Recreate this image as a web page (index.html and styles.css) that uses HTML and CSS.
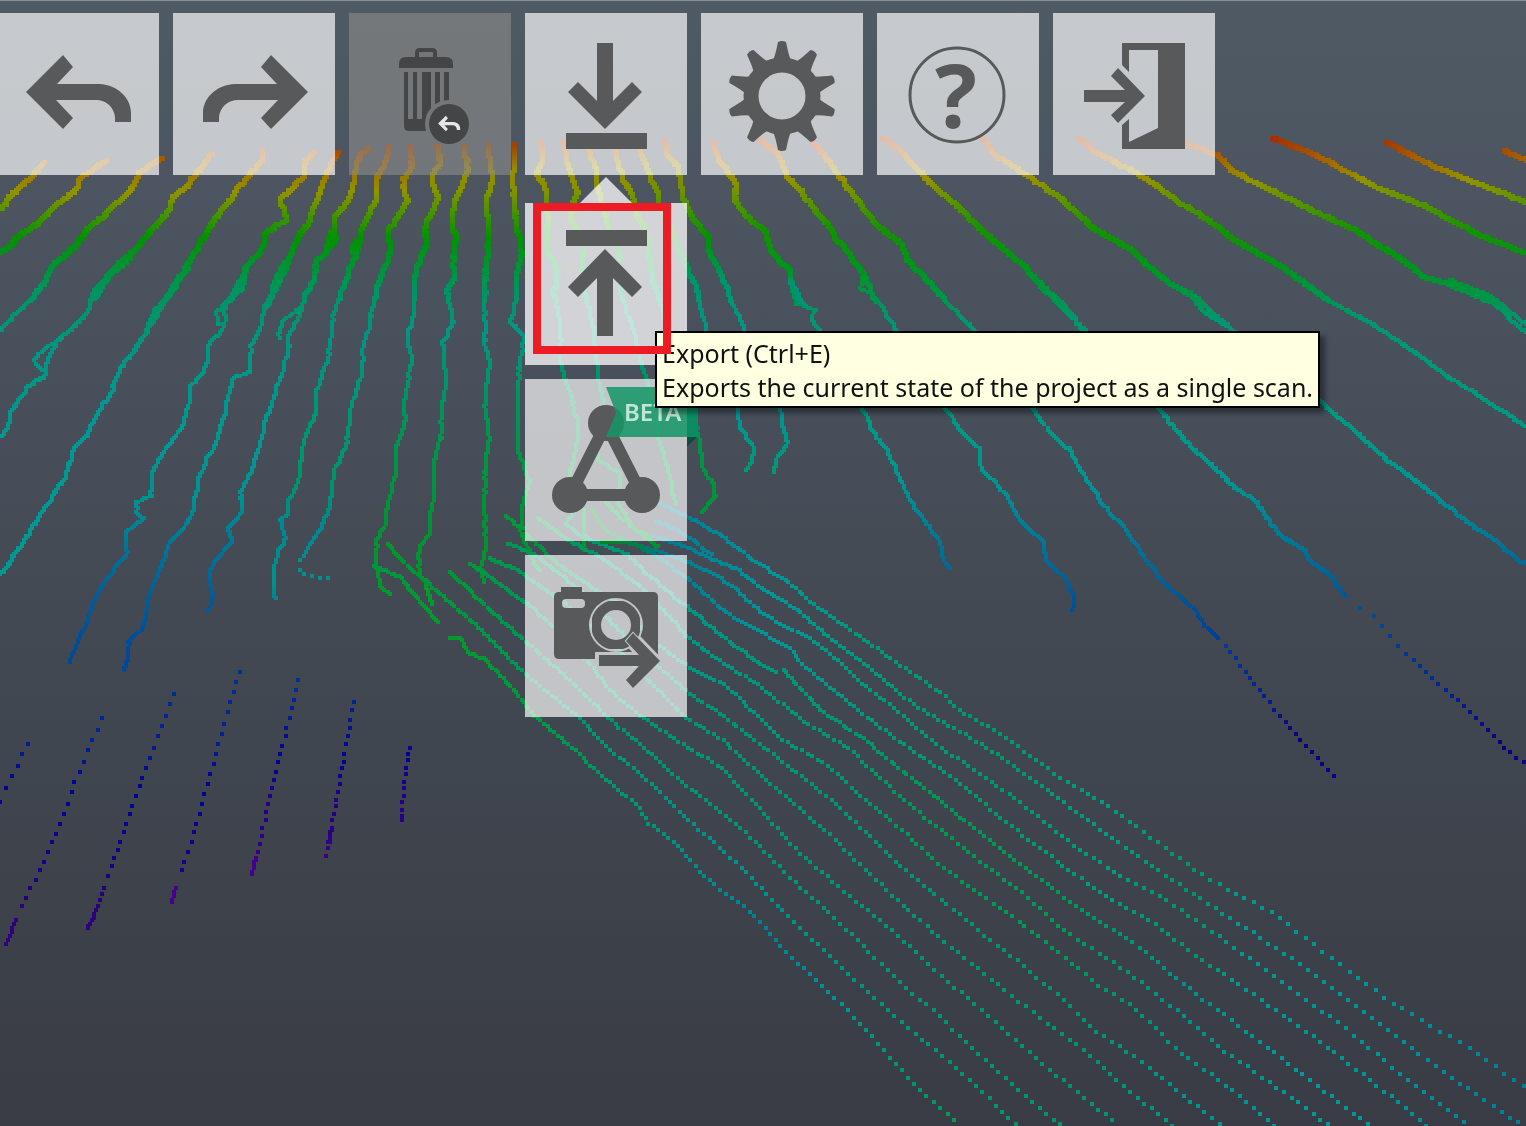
FILE: index.html
```html
<!DOCTYPE html>
<html lang="en">
<head>
<meta charset="utf-8">
<title>Point cloud viewer</title>
<link rel="stylesheet" href="styles.css">
</head>
<body>
<canvas class="cloud" id="cloud" width="1526" height="1126" aria-hidden="true"></canvas>
<main class="viewer">
  <nav class="toolbar" aria-label="Main tools">
    <button class="tile" type="button" aria-label="Undo">
      <svg class="icon" viewBox="0 0 162 162"><path id="back" d="M29 79L66 42 76 54 60 71H102C122 72 134 86 134 100V109H118V104C117 94 109 87 99 87H59L76 105 66 116Z"/></svg>
    </button>
    <button class="tile" type="button" aria-label="Redo">
      <svg class="icon" viewBox="0 0 162 162"><use href="#back" transform="translate(164 0) scale(-1 1)"/></svg>
    </button>
    <button class="tile tile-off" type="button" aria-label="Restore deleted" disabled>
      <svg class="icon" viewBox="0 0 162 162">
        <mask id="binCut"><rect width="162" height="162" fill="#fff"/><circle cx="100" cy="111" r="24" fill="#000"/></mask>
        <path d="M68 45V40Q68 37 71 37H83Q86 37 86 40V45" fill="none" stroke="#444546" stroke-width="4"/>
        <path d="M50 55V51Q50 44 57 44H97Q104 44 104 51V55Z"/>
        <path mask="url(#binCut)" d="M55 59H59V106H64V59H68V106H73V59H82V106H86V59H91V106H95V59H100V118H60Q55 118 55 113Z"/>
        <circle cx="100" cy="111" r="20"/>
        <use href="#back" fill="#e6e6e6" transform="translate(83 94) scale(.21)"/>
      </svg>
    </button>
    <div class="group">
      <button class="tile" type="button" aria-label="Import" aria-expanded="true">
        <svg class="icon" viewBox="0 0 162 162"><path d="M72 30H88V88L107 69 117 79 80 116 43 79 53 69 72 88ZM41 120H122V136H41Z"/></svg>
      </button>
      <div class="pointer"></div>
      <div class="menu">
        <div class="entry">
          <button class="tile tile-hot" type="button" aria-label="Export" aria-describedby="tip">
            <svg class="icon" viewBox="0 0 162 162"><path d="M41 27H122V43H41ZM80 46L117 84 107 94 88 75V133H72V75L53 94 43 84Z"/></svg>
          </button>
          <div class="tip" id="tip" role="tooltip">
            <p class="tip-line">Export (Ctrl+E)</p>
            <p class="tip-line">Exports the current state of the project as a single scan.</p>
          </div>
          <div class="marker"></div>
        </div>
        <div class="entry">
          <button class="tile" type="button" aria-label="Network, beta">
            <svg class="icon" viewBox="0 0 162 162"><path d="M81 45L45 116H117Z" fill="none" stroke="#58595a" stroke-width="12"/><circle cx="81" cy="44" r="18"/><circle cx="45" cy="116" r="18"/><circle cx="117" cy="116" r="18"/></svg>
          </button>
          <div class="flag"><span class="flag-text">BETA</span></div>
          <div class="fold"></div>
        </div>
        <button class="tile" type="button" aria-label="Export image">
          <svg class="icon" viewBox="0 0 162 162">
            <mask id="camCut"><rect width="162" height="162" fill="#fff"/><rect x="37" y="44" width="23" height="9" rx="4" fill="#000"/><circle cx="91" cy="70" r="27" fill="#000"/><path d="M74 100H114L101 86 108 78 135 106 108 133 101 125 114 111H74Z" fill="#000" stroke="#000" stroke-width="6"/><rect x="70" y="97" width="20" height="12" fill="#000"/></mask>
            <mask id="lensCut"><rect width="162" height="162" fill="#fff"/><path d="M74 100H114L101 86 108 78 135 106Z" fill="#000" stroke="#000" stroke-width="2"/></mask>
            <path mask="url(#camCut)" d="M36 37V32H57V37H128Q133 37 133 42V104H34Q29 104 29 99V42Q29 37 34 37Z"/>
            <circle mask="url(#lensCut)" cx="91" cy="70" r="20" fill="none" stroke="#58595a" stroke-width="10"/>
            <path d="M74 100H114L101 86 108 78 135 106 108 133 101 125 114 111H74Z"/>
          </svg>
        </button>
      </div>
    </div>
    <button class="tile" type="button" aria-label="Settings">
      <svg class="icon" viewBox="0 0 162 162">
        <g transform="translate(81 83)">
          <circle r="31" fill="none" stroke="#58595a" stroke-width="15"/>
          <path id="tooth" d="M-9 -36Q-7 -39 -4 -54Q0 -56 4 -54Q7 -39 9 -36Z"/>
          <use href="#tooth" transform="rotate(36)"/><use href="#tooth" transform="rotate(72)"/><use href="#tooth" transform="rotate(108)"/><use href="#tooth" transform="rotate(144)"/><use href="#tooth" transform="rotate(180)"/><use href="#tooth" transform="rotate(216)"/><use href="#tooth" transform="rotate(252)"/><use href="#tooth" transform="rotate(288)"/><use href="#tooth" transform="rotate(324)"/>
        </g>
      </svg>
    </button>
    <button class="tile" type="button" aria-label="Help">
      <svg class="icon" viewBox="0 0 162 162"><circle cx="80" cy="82" r="47" fill="none" stroke="#58595a" stroke-width="3"/><text class="mark" x="79" y="115" text-anchor="middle">?</text></svg>
    </button>
    <button class="tile" type="button" aria-label="Exit">
      <svg class="icon" viewBox="0 0 162 162"><path d="M69 30H132V136H69V112L76 106V129L105 115V37H76V59L69 52ZM31 77H72L58 63 65 55 92 83 65 110 58 102 72 89H31Z"/></svg>
    </button>
  </nav>
</main>
<script src="cloud.js"></script>
</body>
</html>
```
FILE: styles.css
```css
* { box-sizing: border-box; }

body {
  margin: 0;
  min-height: 100vh;
  overflow: hidden;
  background: linear-gradient(#4f5a64, #4b535f 22%, #434a54 52%, #393c44);
  font-family: "Noto Sans", "Open Sans", sans-serif;
}

.cloud {
  position: fixed;
  top: 0;
  left: 0;
  width: 100%;
  height: 100%;
  object-fit: cover;
  object-position: left top;
}

.viewer {
  position: relative;
  border-top: 1px solid #87919a;
}

.toolbar {
  display: flex;
  align-items: flex-start;
  gap: 14px;
  margin-left: -3px;
  padding-top: 12px;
}

.tile {
  display: block;
  flex: none;
  width: 162px;
  height: 162px;
  margin: 0;
  padding: 0;
  border: 0;
  background: rgba(255, 255, 255, .68);
}

.tile-off { background: rgba(142, 140, 138, .6); }
.tile-off .icon { fill: #444546; }
.tile-hot { background: rgba(255, 255, 255, .75); }

.icon {
  display: block;
  width: 100%;
  height: 100%;
  fill: #58595a;
}

.mark {
  font-family: "Open Sans", "Noto Sans", sans-serif;
  font-size: 88px;
  font-weight: 700;
}

.group, .menu {
  display: flex;
  flex-direction: column;
}

.menu { gap: 14px; }

.pointer {
  align-self: center;
  width: 52px;
  height: 26px;
  margin-top: 2px;
  background: rgba(255, 255, 255, .75);
  clip-path: polygon(50% 0, 100% 100%, 0 100%);
}

.entry { position: relative; }
.entry:first-child { z-index: 2; }

.tip {
  position: absolute;
  left: 130px;
  top: 128px;
  padding: 3px 5px 2px;
  border: 2px solid #000;
  background: #ffffe1;
  box-shadow: 5px 5px 5px rgba(0, 0, 0, .4);
  color: #111;
  white-space: nowrap;
}

.tip-line {
  margin: 0;
  font-size: 25px;
  line-height: 34px;
}

.marker {
  position: absolute;
  left: 8px;
  top: 0;
  width: 138px;
  height: 151px;
  border: 8px solid #ed1c24;
}

.flag {
  position: absolute;
  left: 81px;
  top: 8px;
  width: 92px;
  height: 50px;
  padding: 8px 0 0 18px;
  background: linear-gradient(90deg, rgba(20, 150, 103, .86) 81px, #0b8c62 81px);
  clip-path: polygon(0 0, 100% 0, 100% 100%, 0 100%, 11% 52%);
}

.flag-text {
  display: block;
  color: #bfe5d5;
  font-size: 24px;
  font-weight: 600;
  line-height: 34px;
}

.fold {
  position: absolute;
  left: 162px;
  top: 58px;
  width: 10px;
  height: 10px;
  background: #0c4f40;
  clip-path: polygon(0 0, 100% 0, 0 100%);
}
```
FILE: cloud.js
```javascript
// Colour ramps: axis the ramp runs along, then [position, r, g, b] stops.
const ramps = {
  left: ['y', [138,165,45,0],[160,165,95,0],[192,146,146,0],[238,0,146,0],[290,0,148,95],[350,0,150,130],[440,0,152,145],[500,0,145,145],[550,0,115,152],[600,0,92,152],[660,0,72,152]],
  sea: ['y', [138,165,45,0],[160,165,95,0],[192,146,146,0],[238,0,146,0],[290,0,148,85],[350,0,150,130],[410,0,152,148],[600,0,152,145]],
  teal: ['y', [138,165,45,0],[160,165,95,0],[192,146,146,0],[238,0,146,0],[290,0,148,95],[340,0,148,130],[410,0,150,115],[480,0,148,105],[530,0,135,145],[580,0,145,140],[612,0,125,150]],
  mid: ['y', [138,165,45,0],[170,150,140,0],[192,130,146,0],[238,0,146,0],[290,0,148,95],[330,0,150,130],[380,0,148,105],[450,0,148,72],[530,0,146,52],[610,0,155,40]],
  edge: ['y', [138,165,45,0],[165,150,130,0],[192,110,146,0],[238,0,146,0],[280,0,148,105],[340,0,150,140],[420,0,150,145],[474,0,152,115]],
  right: ['y', [137,165,45,0],[158,165,95,0],[180,146,146,0],[230,20,146,0],[268,0,148,30],[320,0,150,110],[420,0,152,130],[480,0,150,145],[540,0,120,150],[600,0,85,152],[640,0,60,152],[700,0,30,145],[740,15,0,120],[775,5,0,145]],
  deep: ['y', [670,0,48,150],[740,0,32,150],[790,0,0,150],[850,15,0,140],[900,38,0,125],[930,50,0,125]],
  deepNear: ['y', [680,0,48,150],[760,0,0,150],[800,35,0,140],[830,40,0,130],[870,70,0,145]],
  low: ['x', [370,0,148,70],[440,0,155,40],[520,0,152,60],[640,0,150,115],[710,0,140,140],[760,0,128,148],[840,0,148,148],[900,0,150,105],[960,0,155,80]],
  next: ['x', [380,0,152,40],[450,0,150,60],[600,0,150,110],[720,0,145,140],[820,0,145,130],[1010,0,150,100]],
  fan: ['x', [450,0,150,50],[530,0,150,90],[700,0,148,115],[900,0,148,115],[1060,0,148,105],[1200,0,148,140],[1300,0,150,150]],
  core: ['x', [510,0,145,40],[600,0,150,110],[700,0,150,130],[850,0,150,110],[930,0,152,80],[1070,0,152,85],[1180,0,145,135],[1300,0,152,152],[1400,0,150,152]],
  high: ['x', [600,0,135,30],[640,0,125,80],[662,0,120,140],[700,0,130,150],[770,0,150,152],[850,0,152,125],[1000,0,152,100],[1110,0,155,130],[1190,0,150,95],[1240,0,152,145],[1400,0,145,150],[1526,0,125,152]]
};

// Scan lines: ramp, spacing of the dots at both ends, points.
const scans = [
  ['left',2,2,'44,162 35,172 25,182 7,197 0,210'],
  ['left',2,2,'106,160 81,177 74,192 54,205 37,223 17,237 0,253'],
  ['left',2,2,'162,157 139,173 128,193 108,210 85,230 79,240 51,267 44,283 27,302 0,332'],
  ['left',2,2,'211,153 193,177 189,185 172,198 166,213 149,230 132,252 118,262 93,293 88,313 57,342 48,357 44,375 27,388 15,407 7,428 0,437'],
  ['left',2,2,'130,257 110,275 95,298'],
  ['left',3,3,'59,340 39,353 34,362 42,370'],
  ['sea',2,2,'262,150 260,160 242,182 223,207 210,225 196,250 183,273 152,315 145,333 132,353 117,373 112,393 90,425 88,435 73,450 66,477 51,498 37,520 22,545 0,575'],
  ['sea',2,2,'188,268 165,300 150,325 135,350'],
  ['left',2,3,'313,152 304,160 304,177 281,198 286,220 267,232 260,253 245,267 242,287 215,313 218,323 225,323 223,330 208,347 205,370 191,388 184,423 169,445 152,472 152,495 137,502 137,512 144,518 125,532 127,555 108,577 93,603 84,630 75,647 68,662'],
  ['left',2,2,'245,270 234,292 226,304 225,322'],
  ['left',2,3,'338,151 330,167 323,180 309,220 294,240 284,273 262,315 260,330 250,347 250,372 233,378 226,410 216,443 198,478 193,510 183,528 169,543 159,570 149,600 147,620 140,632 128,640 127,665 122,672'],
  ['left',2,2,'284,262 274,280 270,298 262,308'],
  ['left',2,3,'367,148 357,160 355,180 348,200 333,217 335,240 316,263 314,280 304,297 301,313 287,337 287,357 270,407 254,467 242,492 243,513 228,527 233,540 210,570 213,597 206,612'],
  ['left',3,3,'301,307 282,323 280,338'],
  ['mid',2,2,'331,232 325,248'],
  ['teal',2,3,'389,145 387,160 377,177 375,200 360,227 357,253 345,280 333,317 328,357 316,390 316,413 303,440 299,483 286,503 287,515 280,520 284,540 277,553 273,570 274,593 276,598'],
  ['mid',2,2,'355,240 352,252'],
  ['teal',2,3,'411,146 411,167 402,178 406,202 387,230 390,253 377,287 370,317 365,343 360,377 353,403 347,443 335,470 330,500 321,527'],
  ['teal',3,5,'321,527 299,563'],
  ['teal',7,9,'299,570 307,576 323,578 336,576'],
  ['mid',2,3,'436,145 439,163 431,177 438,197 426,223 426,240 414,277 414,310 407,337 411,360 407,397 404,430 397,450 397,470 389,497 387,520 377,540 377,563 382,587 392,595'],
  ['mid',2,3,'463,145 468,170 455,197 450,220 455,237 453,277 445,290 455,323 443,343 446,377 441,437 434,460 434,497 429,533 418,550 419,573 429,590 434,607'],
  ['mid',2,3,'487,143 492,177 487,200 488,243 483,297 485,343 488,363 485,407 488,443 483,497 485,547 480,570 483,583'],
  ['mid',2,3,'514,143 512,183 516,217 522,253 516,277 516,310 509,320 524,337 519,375 518,430 519,447 529,482 522,515 522,535 532,560 541,573'],
  ['mid',2,3,'540,142 543,157 537,173 545,190 545,197 548,223 545,247 557,270 552,290 560,320 562,367 565,380 573,403 579,437 570,473 584,510 584,550'],
  ['mid',2,3,'563,142 568,167 578,193 573,200 570,217 583,243 583,287 592,317 598,367 602,400 598,459 620,473 617,503 630,525 660,548'],
  ['mid',2,3,'587,142 593,163 600,193 605,217 617,250 620,287 630,320 643,367 653,403 660,443 670,470 677,505'],
  ['mid',2,3,'612,142 620,170 632,197 633,207 647,237 650,270 663,310 672,340 690,400 699,440 704,470 714,486 717,497 702,512'],
  ['edge',2,3,'637,142 650,173 658,200 673,237 693,283 707,330 737,408 741,430 753,447 752,460 747,470'],
  ['edge',2,3,'665,140 665,153 677,167 683,197 687,207 707,237 710,257 720,273 734,307 744,330 780,408 784,430 788,443 775,460 774,474'],
  ['right',2,3,'712,142 720,163 738,183 734,200 750,220 764,230 770,250 788,270 796,303 815,310 812,320 819,330 861,408 873,433 888,450 912,503 939,540 942,555 951,570'],
  ['edge',2,2,'790,280 798,298 806,306'],
  ['right',2,3,'758,138 777,153 788,177 807,200 826,223 863,273 872,295 884,310 896,330 947,408 960,430 980,447 982,470 1004,493 1020,520 1044,543 1047,563 1066,580 1074,597 1072,611'],
  ['right',3,3,'864,276 860,290 869,292 873,300'],
  ['right',2,3,'812,142 840,177 857,200 875,223 901,243 907,260 917,270 939,293 974,330 1033,408 1052,435 1071,452 1100,500 1123,527 1145,560 1171,590 1195,611 1203,625 1219,638'],
  ['right',8,8,'1226,646 1234,657 1251,679 1287,724 1335,777'],
  ['right',2,2,'883,137 905,155 922,175 950,200 982,230 1025,267 1058,303 1085,330 1160,410 1176,432 1230,483 1257,503 1282,537 1306,550 1312,563 1328,573 1345,597'],
  ['right',2,2,'1040,285 1065,305 1082,330'],
  ['right',15,11,'1360,608 1374,616 1387,629 1396,645 1419,665'],
  ['right',9,8,'1419,665 1463,706 1499,742 1517,757 1526,763'],
  ['right',2,2,'982,138 993,153 1027,175 1063,200 1093,228 1128,247 1158,275 1198,300 1233,330 1322,403 1349,425 1387,460 1430,492 1468,523 1490,537 1526,565'],
  ['right',2,2,'1190,292 1205,312 1231,329'],
  ['right',2,2,'1078,137 1097,153 1137,173 1177,200 1198,213 1228,235 1279,265 1328,300 1382,330 1446,375 1526,427'],
  ['right',2,2,'1172,137 1217,155 1230,170 1247,178 1301,205 1355,230 1398,257 1425,277 1446,283 1495,303 1510,318 1526,333'],
  ['right',2,2,'1450,280 1492,297 1526,324'],
  ['right',2,2,'1271,137 1317,155 1382,190 1425,205 1479,235 1526,253'],
  ['right',2,2,'1387,142 1436,167 1526,202'],
  ['right',2,2,'1503,150 1526,160'],
  ['deep',12,14,'28,743 17,766 6,788 0,803'],
  ['deep',12,10,'102,718 78,774 62,819 39,871 21,910'],
  ['deep',5,4,'17,919 12,930 6,945'],
  ['deep',12,9,'174,693 147,766 123,835 105,883'],
  ['deep',7,3,'104,888 98,905 91,923 86,930'],
  ['deep',11,10,'240,671 216,754 193,837 179,878'],
  ['deepNear',5,3,'176,887 173,898 171,905'],
  ['deepNear',10,8,'298,680 282,748 262,833 257,857'],
  ['deepNear',3,3,'257,857 251,876'],
  ['deepNear',9,7,'354,702 343,763 331,830 325,860'],
  ['deepNear',3,3,'331,830 330,842'],
  ['deepNear',7,7,'411,747 406,766 401,823'],
  ['deepNear',3,3,'402,815 401,823'],
  ['low',3,3,'374,566 399,577 420,600 439,624'],
  ['low',3,3,'506,515 514,525 524,528'],
  ['low',3,9,'450,637 460,639 469,653 485,659 512,688 535,716 573,748 600,775 638,806 649,824 676,843 703,876 734,900 757,917 791,958 837,999 883,1049 917,1088 956,1121'],
  ['next',3,9,'389,544 399,558 435,589 477,626 523,672 577,716 611,750 653,785 684,816 737,863 787,915 833,960 879,1001 900,1020 944,1058 984,1094 1018,1126'],
  ['fan',3,9,'450,571 492,612 523,639 570,680 607,717 646,750 688,787 741,828 791,878 829,913 900,982 944,1020 980,1056 1020,1091 1062,1126'],
  ['fan',3,9,'471,564 523,600 575,645 610,690 640,716 676,740 722,768 753,801 795,849 850,897 900,937 940,975 996,1022 1060,1078 1119,1126'],
  ['fan',3,9,'489,558 515,569 561,600 619,650 684,716 722,740 772,785 829,834 900,903 952,948 1020,1002 1084,1051 1130,1092 1173,1126'],
  ['fan',3,9,'508,543 540,558 580,590 638,650 688,692 726,718 783,762 837,805 900,865 952,909 1000,948 1024,966 1060,997 1096,1031 1142,1062 1179,1092 1222,1126'],
  ['core',3,9,'526,534 545,552 580,580 620,605 650,638 688,667 726,686 783,740 825,764 860,795 902,830 944,869 1006,912 1050,946 1100,986 1132,1006 1179,1051 1231,1089 1275,1126'],
  ['core',3,9,'538,518 565,538 600,557 640,586 665,612 688,637 714,657 760,686 806,723 848,748 900,796 928,820 976,858 1024,894 1060,928 1128,972 1175,1009 1219,1047 1299,1103 1330,1126'],
  ['core',3,4,'575,511 565,524 590,540 626,554 655,580 688,608 707,624 740,650 776,672'],
  ['core',4,9,'783,670 822,711 868,742 900,769 948,807 1012,858 1072,903 1140,948 1179,981 1239,1026 1319,1087 1370,1126'],
  ['high',3,9,'592,510 605,530 636,545 660,558 688,579 724,611 791,649 802,665 848,702 900,742 956,780 1008,824 1064,867 1106,896 1155,925 1203,961 1247,990 1315,1038 1379,1087 1427,1126'],
  ['high',3,10,'602,542 625,542 655,550 688,562 711,573 734,587 753,606 776,622 806,636 837,659 852,675 900,713 946,751 1012,796 1066,840 1124,878 1167,900 1219,937 1283,983 1343,1026 1403,1076 1470,1126'],
  ['mid',3,3,'606,501 620,518 636,530 652,536'],
  ['high',3,10,'652,536 675,543 688,547 714,560 737,569 760,587 799,611 837,644 870,668 904,697 930,715 986,747 1048,791 1096,826 1140,858 1189,891 1245,928 1287,955 1347,999 1409,1047 1463,1085 1522,1126'],
  ['high',3,4,'657,521 675,529 688,536 702,549 714,556'],
  ['high',3,11,'661,504 688,517 722,536 753,560 787,581 818,608 845,626 900,665 944,695 952,706 996,731 1054,773 1112,809 1175,855 1207,878 1275,914 1339,964 1391,1002 1459,1042 1526,1087']
];

function colourAt(ramp, x, y) {
  const v = ramp[0] === 'x' ? x : y;
  const stops = ramp.slice(1);
  let i = 0;
  while (i < stops.length - 2 && v > stops[i + 1][0]) i++;
  const a = stops[i], b = stops[i + 1];
  const t = Math.min(1, Math.max(0, (v - a[0]) / (b[0] - a[0])));
  const mix = k => Math.round(a[k] + (b[k] - a[k]) * t);
  return `rgb(${mix(1)},${mix(2)},${mix(3)})`;
}

const ctx = document.getElementById('cloud').getContext('2d');
let seed = 7;
const noise = () => (seed = (seed * 16807) % 2147483647) / 2147483647 - 0.5;

for (const [name, from, to, text] of scans) {
  const pts = text.split(' ').map(p => p.split(',').map(Number));
  let total = 0;
  for (let i = 1; i < pts.length; i++) total += Math.hypot(pts[i][0] - pts[i - 1][0], pts[i][1] - pts[i - 1][1]);
  let done = 0, next = 0, drift = 0;
  for (let i = 1; i < pts.length; i++) {
    const [ax, ay] = pts[i - 1], [bx, by] = pts[i];
    const len = Math.hypot(bx - ax, by - ay);
    while (next <= done + len) {
      const t = (next - done) / len;
      // Dense lines wander a little, sparse ones stay on track.
      drift = from < 4 && to < 8 ? drift * 0.8 + noise() * 1.6 : noise() * 0.8;
      const x = ax + (bx - ax) * t + drift, y = ay + (by - ay) * t;
      const size = y < 300 && from === 2 ? 5 : 4;
      ctx.fillStyle = colourAt(ramps[name], x, y);
      ctx.fillRect(Math.round(x / 2) * 2 - 2, Math.round(y / 2) * 2 - 2, size, size);
      next += from + (to - from) * Math.min(1, next / total * 1.3);
    }
    done += len;
  }
}
```
